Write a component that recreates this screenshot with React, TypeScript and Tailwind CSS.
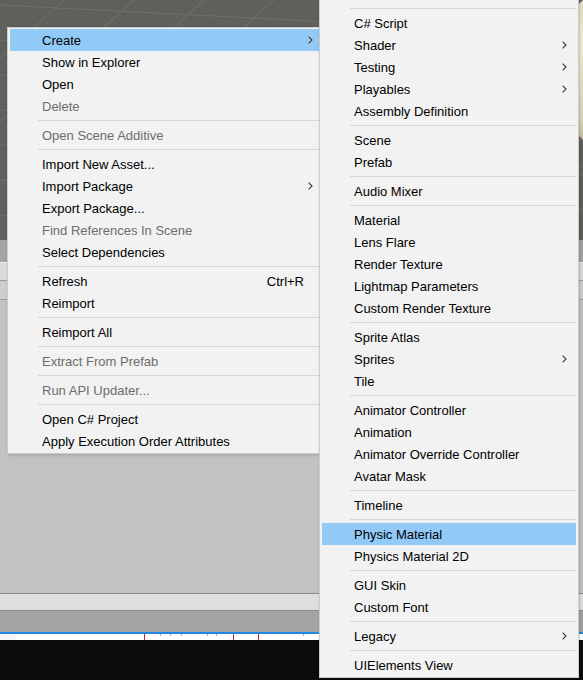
import React from 'react'

type Entry =
  | 'sep'
  | { label: string; shortcut?: string; sub?: boolean; disabled?: boolean; active?: boolean }

const assetMenu: Entry[] = [
  { label: 'Create', sub: true, active: true },
  { label: 'Show in Explorer' },
  { label: 'Open' },
  { label: 'Delete', disabled: true },
  'sep',
  { label: 'Open Scene Additive', disabled: true },
  'sep',
  { label: 'Import New Asset...' },
  { label: 'Import Package', sub: true },
  { label: 'Export Package...' },
  { label: 'Find References In Scene', disabled: true },
  { label: 'Select Dependencies' },
  'sep',
  { label: 'Refresh', shortcut: 'Ctrl+R' },
  { label: 'Reimport' },
  'sep',
  { label: 'Reimport All' },
  'sep',
  { label: 'Extract From Prefab', disabled: true },
  'sep',
  { label: 'Run API Updater...', disabled: true },
  'sep',
  { label: 'Open C# Project' },
  { label: 'Apply Execution Order Attributes' },
]

// first row sits above the window edge, so it is left blank
const createMenu: Entry[] = [
  { label: '' },
  'sep',
  { label: 'C# Script' },
  { label: 'Shader', sub: true },
  { label: 'Testing', sub: true },
  { label: 'Playables', sub: true },
  { label: 'Assembly Definition' },
  'sep',
  { label: 'Scene' },
  { label: 'Prefab' },
  'sep',
  { label: 'Audio Mixer' },
  'sep',
  { label: 'Material' },
  { label: 'Lens Flare' },
  { label: 'Render Texture' },
  { label: 'Lightmap Parameters' },
  { label: 'Custom Render Texture' },
  'sep',
  { label: 'Sprite Atlas' },
  { label: 'Sprites', sub: true },
  { label: 'Tile' },
  'sep',
  { label: 'Animator Controller' },
  { label: 'Animation' },
  { label: 'Animator Override Controller' },
  { label: 'Avatar Mask' },
  'sep',
  { label: 'Timeline' },
  'sep',
  { label: 'Physic Material', active: true },
  { label: 'Physics Material 2D' },
  'sep',
  { label: 'GUI Skin' },
  { label: 'Custom Font' },
  'sep',
  { label: 'Legacy', sub: true },
  'sep',
  { label: 'UIElements View' },
]

function Chevron() {
  return (
    <svg width="5" height="8" viewBox="0 0 5 8" className="shrink-0">
      <path d="M0.6 0.6 L4 4 L0.6 7.4" fill="none" stroke="#3a3a3a" strokeWidth="1.1" />
    </svg>
  )
}

function Menu({ items, className }: { items: Entry[]; className: string }) {
  return (
    <div className={`absolute bg-[#f2f2f2] border border-[#cccccc] px-[2px] py-[1px] shadow-[1px_1px_3px_rgba(0,0,0,0.18)] ${className}`}>
      {items.map((it, i) =>
        it === 'sep' ? (
          <div key={i} className="h-[7px] pl-[28px] flex items-center">
            <div className="h-px w-full bg-[#d7d7d7]" />
          </div>
        ) : (
          <div
            key={i}
            className={`h-[22px] flex items-center pl-[32px] pr-[9px] ${it.active ? 'bg-[#91c9f7]' : ''} ${it.disabled ? 'text-[#6d6d6d]' : 'text-black'}`}
          >
            <span className="flex-1 whitespace-nowrap">{it.label}</span>
            {it.shortcut && <span className="mr-[9px]">{it.shortcut}</span>}
            {it.sub && <Chevron />}
          </div>
        )
      )}
    </div>
  )
}

function SceneView() {
  const diag = [-200, -130, -60, 10, 80, 150, 220, 290, 360, 430, 500]
  const flat = [-30, 5, 40, 75, 110, 145, 180, 215]
  return (
    <svg width="583" height="240" viewBox="0 0 583 240" className="shrink-0 block">
      <defs>
        <radialGradient id="ball" cx="0.25" cy="0.35" r="0.75">
          <stop offset="0" stopColor="#f7f0d8" />
          <stop offset="0.6" stopColor="#dcd2b2" />
          <stop offset="1" stopColor="#8a8268" />
        </radialGradient>
      </defs>
      <rect width="583" height="240" fill="#5f5f5b" />
      {diag.map(x => (
        <line key={'d' + x} x1={x} y1={240} x2={x + 264} y2={0} stroke="#73736e" strokeWidth="1" />
      ))}
      {flat.map(y => (
        <line key={'f' + y} x1={0} y1={y} x2={583} y2={y + 30} stroke="#6f6f6a" strokeWidth="1" />
      ))}
      <circle cx="640" cy="70" r="90" fill="url(#ball)" />
    </svg>
  )
}

export default function App() {
  return (
    <div className="relative w-[583px] h-[680px] overflow-hidden font-['Liberation_Sans',Arial,sans-serif] text-[13px] leading-none">
      <div className="flex flex-col h-full">
        <SceneView />
        <div className="h-[22px] bg-[#a3a3a3] shrink-0" />
        <div className="h-px bg-[#efefef] shrink-0" />
        <div className="h-[17px] bg-[#dadada] shrink-0" />
        <div className="h-px bg-[#9a9a9a] shrink-0" />
        <div className="h-[18px] bg-[#cecece] shrink-0" />
        <div className="h-px bg-[#9a9a9a] shrink-0" />
        <div className="flex-1 bg-[#c2c2c2]" />
        <div className="h-px bg-[#8a8a8a] shrink-0" />
        <div className="h-[16px] bg-[#dedede] shrink-0" />
        <div className="h-px bg-[#8a8a8a] shrink-0" />
        <div className="h-[21px] bg-[#a3a3a3] shrink-0" />
        <div className="h-[2px] bg-[#1e88e5] shrink-0" />
        <div className="h-[6px] bg-white shrink-0 flex">
          <div className="w-[16px] bg-[#f4f5f8]" />
          <svg width="567" height="6" viewBox="0 0 567 6" className="block">
            <line x1="128.5" y1="0" x2="128.5" y2="6" stroke="#d0202a" />
            <line x1="217.5" y1="0" x2="217.5" y2="6" stroke="#d0202a" />
            <line x1="242.5" y1="0" x2="242.5" y2="6" stroke="#d0202a" />
            {[144, 154, 165, 191, 200, 287].map(x => (
              <rect key={x} x={x} y={0} width="1" height="1.5" fill="#9a7fc8" />
            ))}
          </svg>
        </div>
        <div className="h-[40px] bg-[#0b0b0b] shrink-0" />
      </div>

      <Menu items={assetMenu} className="left-[7px] top-[27px] w-[318px]" />
      <Menu items={createMenu} className="left-[319px] top-[-19px] w-[260px]" />
    </div>
  )
}
